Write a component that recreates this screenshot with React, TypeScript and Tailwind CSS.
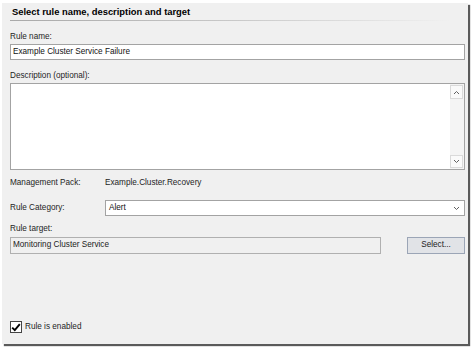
const ui = { fontFamily: '"Liberation Sans", Arial, sans-serif' };

function Chevron({ up = false }: { up?: boolean }) {
  return (
    <svg width="7" height="5" viewBox="0 0 7 5" className="text-[#606060]">
      <path d={up ? 'M1 4 L3.5 1.5 L6 4' : 'M1 1 L3.5 3.5 L6 1'} fill="none" stroke="currentColor" strokeWidth="1" />
    </svg>
  );
}

function Label({ children, className = '' }: { children: React.ReactNode; className?: string }) {
  return <div className={`h-[12px] leading-[12px] text-[8.2px] text-[#1e1e1e] ${className}`}>{children}</div>;
}

export default function App() {
  return (
    <div className="w-[474px] h-[351px] bg-white pt-[3px] pl-[2px]" style={ui}>
      <div className="w-[466px] h-[341px] bg-[#f0f0f0] shadow-[2px_2px_1px_#5a5a5a] flex flex-col pl-[8px] pr-[3px]">
        <div className="mt-[3px] pl-[2px] h-[12px] leading-[12px] text-[9.4px] font-bold text-black">
          Select rule name, description and target
        </div>
        <div className="mt-[2px] h-px w-[440px] bg-gradient-to-r from-[#a9a9a9] via-[#c8c8c8] to-transparent" />

        <Label className="mt-[10px]">Rule name:</Label>
        <div className="mt-px h-[16px] bg-white border border-[#a3a3a3] flex items-center px-[2px] text-[8.2px] text-[#111]">
          Example Cluster Service Failure
        </div>

        <Label className="mt-[10px]">Description (optional):</Label>
        <div className="mt-px h-[87px] bg-white border border-[#a3a3a3] flex justify-end">
          <div className="w-[14px] bg-[#f4f4f4] flex flex-col justify-between py-px pr-px">
            <div className="h-[14px] border border-[#dadada] bg-[#fafafa] flex items-center justify-center">
              <Chevron up />
            </div>
            <div className="h-[13px] border border-[#dadada] bg-[#fafafa] flex items-center justify-center">
              <Chevron />
            </div>
          </div>
        </div>

        <div className="mt-[7px] flex h-[12px] items-center">
          <Label className="w-[95px]">Management Pack:</Label>
          <Label>Example.Cluster.Recovery</Label>
        </div>

        <div className="mt-[11px] flex items-center">
          <Label className="w-[95px]">Rule Category:</Label>
          <div className="flex-1 h-[16px] bg-white border border-[#a3a3a3] flex items-center justify-between pl-[3px] pr-[4px]">
            <span className="text-[8.2px] text-[#111]">Alert</span>
            <Chevron />
          </div>
        </div>

        <Label className="mt-[7px]">Rule target:</Label>
        <div className="mt-[2px] flex items-center h-[17px]">
          <div className="w-[371px] h-[17px] bg-[#f0f0f0] border border-[#b0b0b0] flex items-center px-[2px] text-[8.2px] text-[#222]">
            Monitoring Cluster Service
          </div>
          <div className="ml-[26px] w-[58px] h-[17px] bg-[#e1e3e7] border border-[#9ba5b6] flex items-center justify-center text-[8.2px] text-[#222]">
            Select...
          </div>
        </div>

        <div className="flex-1" />

        <div className="mb-[11px] flex items-center gap-[3px]">
          <div className="w-[12px] h-[12px] bg-white border border-[#444] flex items-center justify-center">
            <svg width="10" height="9" viewBox="0 0 10 9">
              <path d="M1.2 4.6 L3.8 7.2 L8.8 1.2" fill="none" stroke="#000" strokeWidth="1.9" />
            </svg>
          </div>
          <Label>Rule is enabled</Label>
        </div>
      </div>
    </div>
  );
}
